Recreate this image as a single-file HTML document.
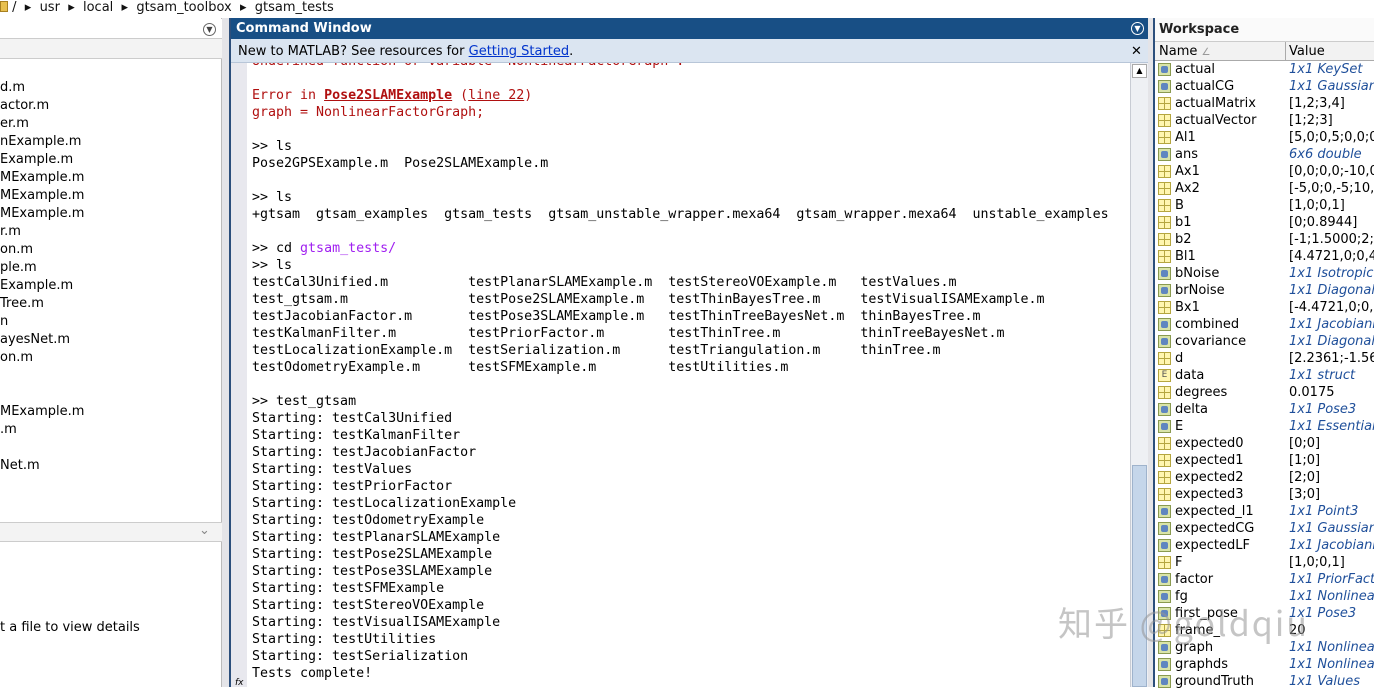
<!DOCTYPE html>
<html><head><meta charset="utf-8"><style>
*{margin:0;padding:0;box-sizing:border-box}
body{width:1374px;height:687px;overflow:hidden;background:#fff;font-family:"DejaVu Sans","Liberation Sans",sans-serif;font-size:13px;color:#000;position:relative}
.abs{position:absolute}
#crumb{left:0;top:0;width:1374px;height:18px;background:#fff;font-size:13px;line-height:15px;color:#111}
#left{left:0;top:18px;width:222px;height:669px;background:#fff;border-right:1px solid #bbb}
.lh{left:0;width:222px;background:#f3f3f3;border-bottom:1px solid #ccc}
.fl{position:absolute;left:0;font-size:13px;line-height:18px;white-space:nowrap}
#split{left:222px;top:18px;width:7px;height:669px;background:#e4e4e8}
#cw{left:229px;top:18px;width:919px;height:669px;background:#fff;border-left:2px solid #2c4f7c}
#cwt{left:0;top:0;width:917px;height:21px;background:#184f85;color:#fff;font-weight:bold;font-size:13px;line-height:22px;padding-left:5px}
#info{left:0;top:21px;width:917px;height:24px;background:#dbe5f1;font-size:13px;line-height:26px;padding-left:7px;border-bottom:1px solid #b8c6d8}
#gut{left:0;top:45px;width:16px;height:624px;background:#e8e8ee}
pre{position:absolute;left:21px;top:35px;font-family:"DejaVu Sans Mono","Liberation Mono",monospace;font-size:13.3px;line-height:17px;color:#000}
.r{color:#b01010}
.p{color:#a020f0}
#sb{left:899px;top:45px;width:18px;height:624px;background:#eef0f4;border-left:1px solid #c8ccd4}
#ws{left:1153px;top:18px;width:221px;height:669px;background:#fff;border-left:2px solid #2c4f7c}
#gap{left:1148px;top:18px;width:5px;height:669px;background:#e4e4e8}
.row{position:absolute;left:0;height:17px;width:219px;font-size:13px;line-height:17px;white-space:nowrap}
.row .n{position:absolute;left:20px}
.row .v{position:absolute;left:134px}
.row .v.i{font-style:italic;color:#1f4f9a}
.ic{position:absolute;left:3px;top:2px;width:13px;height:13px}
.mat{background:#fff6b0;border:1px solid #b5a640;background-image:linear-gradient(#b5a640,#b5a640),linear-gradient(#b5a640,#b5a640);background-size:1px 100%,100% 1px;background-position:5px 0,0 5px;background-repeat:no-repeat}
.obj{background:#d9e4a8;border:1px solid #8a9a50}
.obj::after{content:"";position:absolute;left:2px;top:2px;width:7px;height:7px;background:#5f86c0;border-radius:2px}
.st{background:#fff6b0;border:1px solid #b5a640;font-size:9px;line-height:11px;text-align:center;color:#555}
</style></head><body>
<div id="crumb" class="abs"><span style="display:inline-block;width:8px;height:11px;background:#e8c050;vertical-align:-1px;border:1px solid #a88020"></span> / &nbsp;▸&nbsp; usr &nbsp;▸&nbsp; local &nbsp;▸&nbsp; gtsam_toolbox &nbsp;▸&nbsp; gtsam_tests</div>

<div id="left" class="abs">
 <div class="abs lh" style="top:1px;height:20px;background:#fff;border-bottom:1px solid #ccc"><span class="abs" style="left:203px;top:4px;width:13px;height:13px;border:1px solid #666;border-radius:50%;font-size:8px;line-height:11px;text-align:center;color:#444">▼</span></div>
 <div class="abs lh" style="top:21px;height:20px"></div>
 <div class="fl" style="top:61px">d.m</div>
 <div class="fl" style="top:79px">actor.m</div>
 <div class="fl" style="top:97px">er.m</div>
 <div class="fl" style="top:115px">nExample.m</div>
 <div class="fl" style="top:133px">Example.m</div>
 <div class="fl" style="top:151px">MExample.m</div>
 <div class="fl" style="top:169px">MExample.m</div>
 <div class="fl" style="top:187px">MExample.m</div>
 <div class="fl" style="top:205px">r.m</div>
 <div class="fl" style="top:223px">on.m</div>
 <div class="fl" style="top:241px">ple.m</div>
 <div class="fl" style="top:259px">Example.m</div>
 <div class="fl" style="top:277px">Tree.m</div>
 <div class="fl" style="top:295px">n</div>
 <div class="fl" style="top:313px">ayesNet.m</div>
 <div class="fl" style="top:331px">on.m</div>
 <div class="fl" style="top:385px">MExample.m</div>
 <div class="fl" style="top:403px">.m</div>
 <div class="fl" style="top:439px">Net.m</div>
 <div class="abs lh" style="top:504px;height:20px;border-top:1px solid #ccc"><span class="abs" style="left:199px;top:0px;color:#888;font-size:13px">⌄</span></div>
 <div class="fl" style="top:601px">t a file to view details</div>
</div>
<div id="split" class="abs"></div>

<div id="cw" class="abs">
<pre><span style="color:#b01010">Undefined function or variable 'NonlinearFactorGraph'.</span>

<span class="r">Error in <b><u>Pose2SLAMExample</u></b> (<u>line 22</u>)</span>
<span class="r">graph = NonlinearFactorGraph;</span>

&gt;&gt; ls
Pose2GPSExample.m  Pose2SLAMExample.m

&gt;&gt; ls
+gtsam  gtsam_examples  gtsam_tests  gtsam_unstable_wrapper.mexa64  gtsam_wrapper.mexa64  unstable_examples

&gt;&gt; cd <span class="p">gtsam_tests/</span>
&gt;&gt; ls
testCal3Unified.m          testPlanarSLAMExample.m  testStereoVOExample.m   testValues.m
test_gtsam.m               testPose2SLAMExample.m   testThinBayesTree.m     testVisualISAMExample.m
testJacobianFactor.m       testPose3SLAMExample.m   testThinTreeBayesNet.m  thinBayesTree.m
testKalmanFilter.m         testPriorFactor.m        testThinTree.m          thinTreeBayesNet.m
testLocalizationExample.m  testSerialization.m      testTriangulation.m     thinTree.m
testOdometryExample.m      testSFMExample.m         testUtilities.m

&gt;&gt; test_gtsam
Starting: testCal3Unified
Starting: testKalmanFilter
Starting: testJacobianFactor
Starting: testValues
Starting: testPriorFactor
Starting: testLocalizationExample
Starting: testOdometryExample
Starting: testPlanarSLAMExample
Starting: testPose2SLAMExample
Starting: testPose3SLAMExample
Starting: testSFMExample
Starting: testStereoVOExample
Starting: testVisualISAMExample
Starting: testUtilities
Starting: testSerialization
Tests complete!</pre>
 <div id="cwt" class="abs">Command Window<span class="abs" style="left:900px;top:4px;width:13px;height:13px;border:1px solid #fff;border-radius:50%;font-size:8px;line-height:11px;text-align:center">▼</span></div>
 <div id="info" class="abs">New to MATLAB? See resources for <span style="color:#0033cc;text-decoration:underline">Getting Started</span>.<span class="abs" style="left:900px;top:0;font-weight:bold">✕</span></div>
 <div id="gut" class="abs"><span class="abs" style="left:4px;top:615px;font-size:9px;font-style:italic">fx</span></div>
 <div id="sb" class="abs">
  <div class="abs" style="left:1px;top:1px;width:15px;height:14px;border:1px solid #aaa;background:#fff;font-size:8px;text-align:center;line-height:12px">▲</div>
  <div class="abs" style="left:1px;top:402px;width:15px;height:222px;background:#c5d6ea;border:1px solid #9fb3cc"></div>
 </div>
</div>
<div id="gap" class="abs"></div>

<div id="ws" class="abs">
 <div class="abs" style="left:0;top:0;width:219px;height:23px;font-weight:bold;line-height:24px;padding-left:4px;color:#222;background:#fafafa">Workspace</div>
 <div class="abs" style="left:0;top:23px;width:219px;height:20px;background:#f2f2f2;border-bottom:1px solid #aaa;border-top:1px solid #ccc;line-height:20px"><span class="abs" style="left:4px">Name <span style="color:#999;font-size:10px">∠</span></span><span class="abs" style="left:130px;top:0;height:19px;border-left:1px solid #aaa;padding-left:3px">Value</span></div>
 <div id="rows"></div>
</div>

<div class="abs" style="left:1058px;top:597px;font-family:'Noto Sans CJK SC',sans-serif;font-size:34px;color:rgba(150,150,150,0.55);letter-spacing:2px">知乎 @goldqiu</div>

<script>
var d=[["o","actual","1x1 KeySet",1],["o","actualCG","1x1 Gaussian",1],["m","actualMatrix","[1,2;3,4]"],["m","actualVector","[1;2;3]"],["m","Al1","[5,0;0,5;0,0;0"],["o","ans","6x6 double",1],["m","Ax1","[0,0;0,0;-10,0"],["m","Ax2","[-5,0;0,-5;10,0"],["m","B","[1,0;0,1]"],["m","b1","[0;0.8944]"],["m","b2","[-1;1.5000;2;-"],["m","Bl1","[4.4721,0;0,4."],["o","bNoise","1x1 Isotropic",1],["o","brNoise","1x1 Diagonal",1],["m","Bx1","[-4.4721,0;0,-"],["o","combined","1x1 JacobianF",1],["o","covariance","1x1 Diagonal",1],["m","d","[2.2361;-1.56"],["s","data","1x1 struct",1],["m","degrees","0.0175"],["o","delta","1x1 Pose3",1],["o","E","1x1 Essential",1],["m","expected0","[0;0]"],["m","expected1","[1;0]"],["m","expected2","[2;0]"],["m","expected3","[3;0]"],["o","expected_l1","1x1 Point3",1],["o","expectedCG","1x1 Gaussian",1],["o","expectedLF","1x1 JacobianF",1],["m","F","[1,0;0,1]"],["o","factor","1x1 PriorFacto",1],["o","fg","1x1 Nonlinear",1],["o","first_pose","1x1 Pose3",1],["m","frame_","20"],["o","graph","1x1 Nonlinear",1],["o","graphds","1x1 Nonlinear",1],["o","groundTruth","1x1 Values",1]];
var h="";d.forEach(function(r,i){h+='<div class="row" style="top:'+(43+i*17)+'px"><span class="ic '+(r[0]=="m"?"mat":r[0]=="o"?"obj":"st")+'">'+(r[0]=="s"?"E":"")+'</span><span class="n">'+r[1]+'</span><span class="v'+(r[3]?" i":"")+'">'+r[2]+'</span></div>';});
document.getElementById("rows").innerHTML=h;
</script>
</body></html>
